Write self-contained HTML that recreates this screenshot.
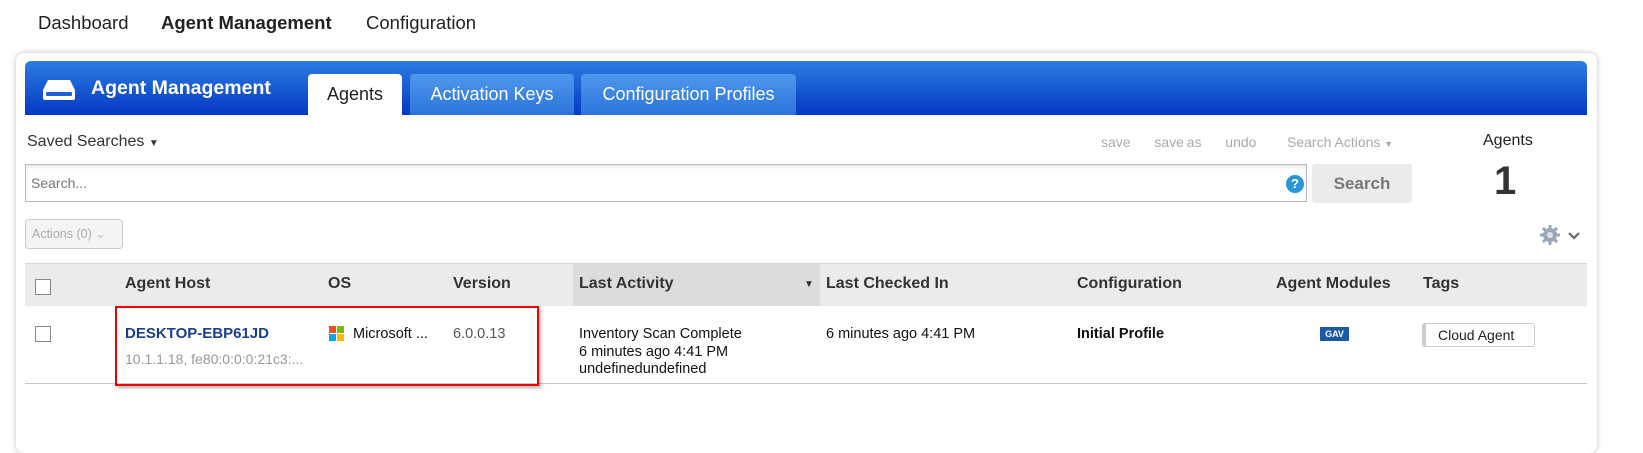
<!DOCTYPE html>
<html><head><meta charset="utf-8"><style>
*{margin:0;padding:0;box-sizing:border-box}
body{width:1643px;height:418px;background:#fff;font-family:"Liberation Sans",Arial,sans-serif;position:relative;overflow:hidden;color:#222}
.a{position:absolute;white-space:nowrap}
.nav{top:12px;font-size:18.5px;color:#222}
.card{left:16px;top:53px;width:1581px;height:400px;background:#fff;border-radius:8px;box-shadow:0 0 6px rgba(0,0,0,.25)}
.bar{left:25px;top:61px;width:1562px;height:54px;background:linear-gradient(#2c7de0,#0438c4);border-radius:6px 6px 0 0}
.tab{top:74px;height:41px;border-radius:4px 4px 0 0;font-size:18px;line-height:41px;text-align:center;color:#fff;background:linear-gradient(#4f97ec,#2c74db)}
.hd{font-weight:bold;font-size:16px;color:#333;top:275px}
.cb{width:16px;height:16px;border:1px solid #888;background:#fff}
.r{font-size:14.5px;color:#111}
</style></head><body>
<div class="a nav" style="left:38px">Dashboard</div>
<div class="a nav" style="left:161px;font-weight:bold">Agent Management</div>
<div class="a nav" style="left:366px">Configuration</div>

<div class="a card"></div>
<div class="a bar"></div>
<svg class="a" style="left:41px;top:78px" width="36" height="24" viewBox="0 0 36 24"><path d="M7 2 H29 L34 12 V20 Q34 22 32 22 H4 Q2 22 2 20 V12 Z" fill="#fff"/><rect x="5" y="14" width="26" height="4" rx="1" fill="#1d5fd4"/></svg>
<div class="a" style="left:91px;top:77px;font-size:19.5px;font-weight:bold;color:#fff">Agent Management</div>
<div class="a tab" style="left:308px;width:94px;background:#fff;color:#222">Agents</div>
<div class="a tab" style="left:410px;width:164px">Activation Keys</div>
<div class="a tab" style="left:581px;width:215px">Configuration Profiles</div>

<div class="a" style="left:27px;top:133px;font-size:16px;color:#333">Saved Searches <span style="font-size:10px">&#9660;</span></div>
<div class="a" style="left:1101px;top:134px;font-size:14px;color:#aaa;word-spacing:8px">save &nbsp;save&#8201;as &nbsp;undo</div>
<div class="a" style="left:1287px;top:134px;font-size:14px;color:#aaa">Search Actions <span style="font-size:9px">&#9660;</span></div>
<div class="a" style="left:1483px;top:132px;font-size:16px;color:#222">Agents</div>

<div class="a" style="left:25px;top:164px;width:1282px;height:38px;border:1px solid #b8b8c8;box-shadow:inset 0 2px 3px rgba(0,0,0,.1)"></div>
<div class="a" style="left:31px;top:175px;font-size:14px;color:#777">Search...</div>
<div class="a" style="left:1286px;top:175px;width:18px;height:18px;border-radius:50%;background:#2a95d8;color:#fff;font-weight:bold;font-size:13px;text-align:center;line-height:18px">?</div>
<div class="a" style="left:1312px;top:164px;width:100px;height:39px;background:#ebebeb;border-radius:3px;font-size:17px;font-weight:bold;color:#777;text-align:center;line-height:39px">Search</div>
<div class="a" style="left:1494px;top:159px;font-size:40px;font-weight:bold;color:#333">1</div>

<div class="a" style="left:25px;top:219px;width:98px;height:30px;border:1px solid #ccc;border-radius:4px;background:#f4f4f4;font-size:12.5px;color:#aaa;line-height:28px;padding-left:6px">Actions (0) <span style="color:#bbb">&#8964;</span></div>
<svg class="a" style="left:1540px;top:225px" width="20" height="20" viewBox="0 0 20 20"><g fill="#9aa7b8"><circle cx="10" cy="10" r="7"/><rect x="8.5" y="0" width="3" height="20"/><rect x="0" y="8.5" width="20" height="3"/><rect x="8.5" y="0" width="3" height="20" transform="rotate(45 10 10)"/><rect x="8.5" y="0" width="3" height="20" transform="rotate(-45 10 10)"/></g><circle cx="10" cy="10" r="3" fill="#dfe4ea"/></svg>
<svg class="a" style="left:1567px;top:231px" width="14" height="9" viewBox="0 0 14 9"><path d="M2 2 L7 7 L12 2" stroke="#666" stroke-width="2.2" fill="none"/></svg>

<div class="a" style="left:25px;top:263px;width:1562px;height:43px;background:#ebebeb;border-top:1px solid #d6d6d6"></div>
<div class="a" style="left:573px;top:264px;width:247px;height:42px;background:#dcdcdc"></div>
<div class="a cb" style="left:35px;top:279px"></div>
<div class="a hd" style="left:125px">Agent Host</div>
<div class="a hd" style="left:328px">OS</div>
<div class="a hd" style="left:453px">Version</div>
<div class="a hd" style="left:579px">Last Activity</div>
<div class="a" style="left:804px;top:279px;font-size:10px;color:#333">&#9660;</div>
<div class="a hd" style="left:826px">Last Checked In</div>
<div class="a hd" style="left:1077px">Configuration</div>
<div class="a hd" style="left:1276px">Agent Modules</div>
<div class="a hd" style="left:1423px">Tags</div>

<div class="a cb" style="left:35px;top:326px"></div>
<div class="a" style="left:125px;top:325px;font-size:15px;font-weight:bold;color:#1c3f8c">DESKTOP-EBP61JD</div>
<div class="a" style="left:125px;top:351px;font-size:14px;color:#999">10.1.1.18, fe80:0:0:0:21c3:...</div>
<svg class="a" style="left:329px;top:326px" width="15" height="15"><rect width="7" height="7" fill="#f25022"/><rect x="8" width="7" height="7" fill="#7fba00"/><rect y="8" width="7" height="7" fill="#00a4ef"/><rect x="8" y="8" width="7" height="7" fill="#ffb900"/></svg>
<div class="a r" style="left:353px;top:326px">Microsoft ...</div>
<div class="a r" style="left:453px;top:326px;color:#555">6.0.0.13</div>
<div class="a r" style="left:579px;top:326px;line-height:17.5px">Inventory Scan Complete<br>6 minutes ago 4:41 PM<br>undefinedundefined</div>
<div class="a r" style="left:826px;top:326px">6 minutes ago 4:41 PM</div>
<div class="a r" style="left:1077px;top:326px;font-weight:bold">Initial Profile</div>
<div class="a" style="left:1320px;top:327px;width:29px;height:14px;background:#1d5aa6;color:#fff;font-size:9px;font-weight:bold;text-align:center;line-height:14px">GAV</div>
<div class="a" style="left:1422px;top:323px;width:113px;height:24px;border:1px solid #ccc;border-left:4px solid #ccc;border-radius:3px;font-size:14px;line-height:22px;padding-left:12px;color:#222">Cloud Agent</div>
<div class="a" style="left:25px;top:383px;width:1562px;height:1px;background:#c8c8c8"></div>
<div class="a" style="left:115px;top:306px;width:424px;height:80px;border:2px solid #e00;box-shadow:2px 2px 3px rgba(0,0,0,.3)"></div>
</body></html>
